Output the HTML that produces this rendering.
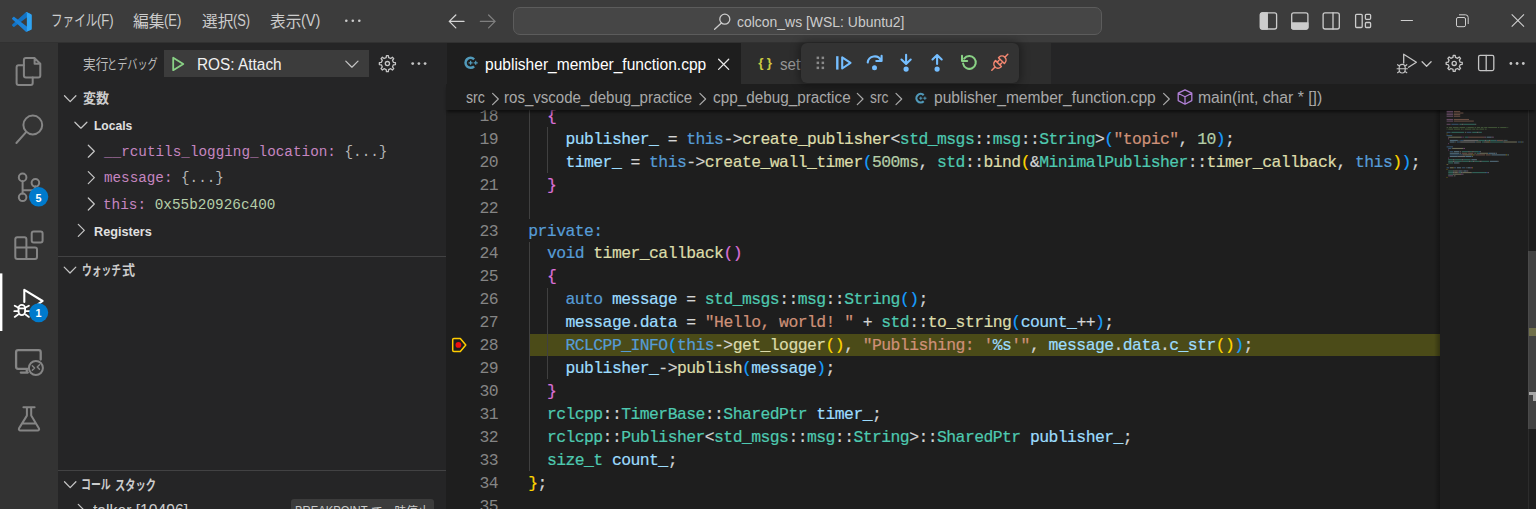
<!DOCTYPE html>
<html lang="ja">
<head>
<meta charset="utf-8">
<title>publisher_member_function.cpp - colcon_ws [WSL: Ubuntu2] - Visual Studio Code</title>
<style>
*{box-sizing:border-box;margin:0;padding:0}
html,body{width:1536px;height:509px;overflow:hidden;background:#1e1e1e}
body{position:relative;font-family:"Liberation Sans","Noto Sans CJK JP",sans-serif;font-size:15.6px;color:#cccccc}
.abs{position:absolute}
svg{display:block;overflow:visible}
.tx{white-space:nowrap;line-height:1;transform-origin:0 0}
.b{font-weight:bold}
.mono{font-family:"Liberation Mono","Noto Sans CJK JP",monospace}
/* title bar */
#titlebar{left:0;top:0;width:1536px;height:42px;background:#3c3c3c}
#titleedge{left:0;top:42px;width:1536px;height:1px;background:#313131}
#cmd{left:513px;top:7px;width:589px;height:28px;border:1px solid #5c5c5c;border-radius:7px;background:#464646}
/* activity bar */
#activity{left:0;top:43px;width:58px;height:466px;background:#333333}
/* sidebar */
#sidebar{left:58px;top:43px;width:388px;height:466px;background:#252526}
.sep{left:58px;width:388px;height:1px;background:#424243}
/* editor */
#tabs{left:446px;top:43px;width:1090px;height:41px;background:#252526}
#tab1{left:447px;top:43px;width:294px;height:41px;background:#1e1e1e}
#tab2{left:741px;top:43px;width:310px;height:41px;background:#2d2d2d}
#dbg{left:801px;top:43px;width:218px;height:39.5px;background:#333333;border-radius:6px;box-shadow:0 0 8px 2px rgba(0,0,0,.36)}
#crumbs{left:446px;top:84px;width:1090px;height:26px;background:#1e1e1e;box-shadow:0 3px 3px -1px rgba(0,0,0,.55)}
#code{left:446px;top:110px;width:1090px;height:399px;background:#1e1e1e;overflow:hidden}
.ln{font-family:"Liberation Mono",monospace;font-size:16.4px;letter-spacing:-0.57px;color:#858585;line-height:23px;height:23px;white-space:pre;text-align:right;left:440px;width:58px}
.cl{-webkit-text-stroke:0.2px;left:528.3px;font-family:"Liberation Mono",monospace;font-size:16.4px;letter-spacing:-0.548px;color:#d4d4d4;height:23px;line-height:23px;white-space:pre}
.k{color:#569cd6}.t{color:#4ec9b0}.f{color:#dcdcaa}.v{color:#9cdcfe}.s{color:#ce9178}.n{color:#b5cea8}
.b1{color:#ffd700}.b2{color:#da70d6}.b3{color:#179fff}
.guide{width:1px;background:#404040}
.vn{color:#c586c0}.vv{color:#b5b5b5}.vnum{color:#b5cea8}
</style>
</head>
<body>
<!-- TITLE BAR -->
<div id="titlebar" class="abs"></div>
<div id="titleedge" class="abs"></div>
<svg class="abs" style="left:12px;top:11.800px" width="19.800" height="19.800" viewBox="0 0 100 100"><path d="M96.461 10.796 75.857.876C73.472-.273 70.622.212 68.750 2.083L1.299 63.583c-1.814 1.654-1.812 4.510.004 6.162l5.510 5.009c1.485 1.350 3.722 1.450 5.321.237L93.361 13.370C96.086 11.303 100 13.246 100 16.667v-.240c0-2.401-1.375-4.590-3.539-5.631z" fill="#1272c4"/><path d="M96.461 89.204 75.857 99.125c-2.385 1.148-5.235.664-7.107-1.208L1.299 36.417c-1.814-1.654-1.812-4.511.004-6.162l5.510-5.009c1.485-1.350 3.722-1.450 5.321-.237L93.361 86.630C96.086 88.697 100 86.754 100 83.333v.239c0 2.401-1.375 4.590-3.539 5.632z" fill="#1b82d8"/><path d="M75.858 99.126c-2.386 1.148-5.236.662-7.108-1.209C71.056 100.223 75 98.590 75 95.328V4.672c0-3.262-3.944-4.895-6.250-2.589C70.622.211 73.472-.274 75.858.874l20.601 9.907C98.623 11.822 100 14.011 100 16.413v67.174c0 2.402-1.377 4.592-3.541 5.633z" fill="#2fa4f3"/></svg>
<div id="cmd" class="abs"></div>

<!-- ACTIVITY BAR -->
<div id="activity" class="abs"></div>

<!-- SIDEBAR -->
<div id="sidebar" class="abs"></div>
<div class="abs" style="left:164px;top:50px;width:205px;height:27px;background:#3c3c3c"></div>
<div class="abs sep" style="top:256px"></div>
<div class="abs sep" style="top:470px"></div>
<div class="abs" style="left:291px;top:499px;width:143px;height:22px;background:#3c3c3c;border-radius:3px"></div>

<!-- EDITOR -->
<div id="tabs" class="abs"></div>
<div id="tab1" class="abs"></div>
<div id="tab2" class="abs"></div>
<div id="code" class="abs"></div>
<div class="abs" style="left:529px;top:334px;width:911px;height:22px;background:#4b4b18"></div>
<div class="abs guide" style="left:529px;top:104.4px;height:114.7px"></div>
<div class="abs guide" style="left:547px;top:127.3px;height:45.9px"></div>
<div class="abs guide" style="left:529px;top:242.0px;height:229.3px"></div>
<div class="abs guide" style="left:547px;top:287.8px;height:91.7px"></div>
<div class="abs ln" style="top:104.75px">18</div>
<div class="abs cl" style="top:104.75px">  <span class="b2">{</span></div>
<div class="abs ln" style="top:127.75px">19</div>
<div class="abs cl" style="top:127.75px">    <span class="v">publisher_</span> = <span class="k">this</span>-&gt;<span class="f">create_publisher</span>&lt;<span class="t">std_msgs</span>::<span class="t">msg</span>::<span class="t">String</span>&gt;<span class="b3">(</span><span class="s">"topic"</span>, <span class="n">10</span><span class="b3">)</span>;</div>
<div class="abs ln" style="top:150.75px">20</div>
<div class="abs cl" style="top:150.75px">    <span class="v">timer_</span> = <span class="k">this</span>-&gt;<span class="f">create_wall_timer</span><span class="b3">(</span><span class="n">500ms</span>, <span class="t">std</span>::<span class="f">bind</span><span class="b1">(</span>&amp;<span class="t">MinimalPublisher</span>::<span class="f">timer_callback</span>, <span class="k">this</span><span class="b1">)</span><span class="b3">)</span>;</div>
<div class="abs ln" style="top:173.75px">21</div>
<div class="abs cl" style="top:173.75px">  <span class="b2">}</span></div>
<div class="abs ln" style="top:196.75px">22</div>
<div class="abs ln" style="top:219.75px">23</div>
<div class="abs cl" style="top:219.75px"><span class="k">private:</span></div>
<div class="abs ln" style="top:241.75px">24</div>
<div class="abs cl" style="top:241.75px">  <span class="k">void</span> <span class="f">timer_callback</span><span class="b2">()</span></div>
<div class="abs ln" style="top:264.75px">25</div>
<div class="abs cl" style="top:264.75px">  <span class="b2">{</span></div>
<div class="abs ln" style="top:287.75px">26</div>
<div class="abs cl" style="top:287.75px">    <span class="k">auto</span> <span class="v">message</span> = <span class="t">std_msgs</span>::<span class="t">msg</span>::<span class="t">String</span><span class="b3">()</span>;</div>
<div class="abs ln" style="top:310.75px">27</div>
<div class="abs cl" style="top:310.75px">    <span class="v">message</span>.<span class="v">data</span> = <span class="s">"Hello, world! "</span> + <span class="t">std</span>::<span class="f">to_string</span><span class="b3">(</span><span class="v">count_</span>++<span class="b3">)</span>;</div>
<div class="abs ln" style="top:333.75px">28</div>
<div class="abs cl" style="top:333.75px">    <span class="k">RCLCPP_INFO</span><span class="b3">(</span><span class="k">this</span>-&gt;<span class="f">get_logger</span><span class="b1">()</span>, <span class="s">"Publishing: '</span><span class="v">%s</span><span class="s">'"</span>, <span class="v">message</span>.<span class="v">data</span>.<span class="v">c_str</span><span class="b1">()</span><span class="b3">)</span>;</div>
<div class="abs ln" style="top:356.75px">29</div>
<div class="abs cl" style="top:356.75px">    <span class="v">publisher_</span>-&gt;<span class="f">publish</span><span class="b3">(</span><span class="v">message</span><span class="b3">)</span>;</div>
<div class="abs ln" style="top:379.75px">30</div>
<div class="abs cl" style="top:379.75px">  <span class="b2">}</span></div>
<div class="abs ln" style="top:402.75px">31</div>
<div class="abs cl" style="top:402.75px">  <span class="t">rclcpp</span>::<span class="t">TimerBase</span>::<span class="t">SharedPtr</span> <span class="v">timer_</span>;</div>
<div class="abs ln" style="top:425.75px">32</div>
<div class="abs cl" style="top:425.75px">  <span class="t">rclcpp</span>::<span class="t">Publisher</span>&lt;<span class="t">std_msgs</span>::<span class="t">msg</span>::<span class="t">String</span>&gt;::<span class="t">SharedPtr</span> <span class="v">publisher_</span>;</div>
<div class="abs ln" style="top:448.75px">33</div>
<div class="abs cl" style="top:448.75px">  <span class="t">size_t</span> <span class="v">count_</span>;</div>
<div class="abs ln" style="top:471.75px">34</div>
<div class="abs cl" style="top:471.75px"><span class="b1">}</span>;</div>
<div class="abs ln" style="top:494.75px">35</div>

<!-- minimap + scrollbar -->
<div class="abs" style="left:1434px;top:110px;width:6px;height:399px;background:linear-gradient(to right,rgba(0,0,0,0),rgba(0,0,0,.32))"></div>
<div class="abs" style="left:1440px;top:110px;width:96px;height:399px;background:#1e1e1e"></div>
<div class="abs" style="left:1528px;top:110px;width:1px;height:399px;background:#2c2c2c"></div>
<div class="abs" style="left:1529px;top:328px;width:7px;height:8px;background:#6b6a2c"></div>
<div class="abs" style="left:1528px;top:251px;width:8px;height:178px;background:rgba(121,121,121,.4)"></div>
<div class="abs" style="left:1529px;top:392px;width:7px;height:3px;background:#a8a8a8"></div>
<div class="abs" style="left:1533px;top:392px;width:3px;height:9px;background:#a8a8a8"></div>
<div id="crumbs" class="abs"></div>
<div class="abs tx" style="left:50.82px;top:13.45px;transform:scaleX(0.7417);color:#cccccc;font-size:15.6px">ファイル</div>
<div class="abs tx" style="left:96.96px;top:13.4px;transform:scaleX(0.8389);color:#cccccc;font-size:15.6px">(F)</div>
<div class="abs tx" style="left:132.7px;top:14.15px;transform:scaleX(1.0097);color:#cccccc;font-size:15.6px">編集</div>
<div class="abs tx" style="left:164.36px;top:13.4px;transform:scaleX(0.8368);color:#cccccc;font-size:15.6px">(E)</div>
<div class="abs tx" style="left:201.5px;top:14.15px;transform:scaleX(1.0032);color:#cccccc;font-size:15.6px">選択</div>
<div class="abs tx" style="left:232.78px;top:13.4px;transform:scaleX(0.8211);color:#cccccc;font-size:15.6px">(S)</div>
<div class="abs tx" style="left:269.9px;top:14.15px;transform:scaleX(1.0032);color:#cccccc;font-size:15.6px">表示</div>
<div class="abs tx" style="left:300.87px;top:13.4px;transform:scaleX(0.9316);color:#cccccc;font-size:15.6px">(V)</div>
<div class="abs tx" style="left:737.0px;top:14.5px;transform:scaleX(0.9554);color:#cccccc;font-size:14.6px">colcon_ws [WSL: Ubuntu2]</div>
<div class="abs tx" style="left:82.7px;top:57.65px;transform:scaleX(0.9577);color:#bbbbbb;font-size:13.2px">実行</div>
<div class="abs tx" style="left:106.96px;top:57.65px;transform:scaleX(0.7687);color:#bbbbbb;font-size:13.2px">とデバッグ</div>
<div class="abs tx" style="left:196.81px;top:56.6px;transform:scaleX(0.9869);color:#f0f0f0;font-size:15.6px">ROS: Attach</div>
<div class="abs tx" style="left:82.9px;top:92.15px;transform:scaleX(0.9885);color:#cccccc;font-size:13.2px;font-weight:bold">変数</div>
<div class="abs tx" style="left:93.99px;top:118.5px;transform:scaleX(0.9146);color:#e0e0e0;font-size:13.2px;font-weight:bold">Locals</div>
<div class="abs tx mono" style="left:104.0px;top:144.7px;transform:scaleX(1.0011);color:#b5b5b5;font-size:14.3px"><span class="vn">__rcutils_logging_location:</span> {...}</div>
<div class="abs tx mono" style="left:104.0px;top:171.1px;transform:scaleX(0.9975);color:#b5b5b5;font-size:14.3px"><span class="vn">message:</span> {...}</div>
<div class="abs tx mono" style="left:103.0px;top:197.6px;transform:scaleX(1.0047);color:#b5cea8;font-size:14.3px"><span class="vn">this:</span> 0x55b20926c400</div>
<div class="abs tx" style="left:93.64px;top:224.5px;transform:scaleX(0.961);color:#e0e0e0;font-size:13.2px;font-weight:bold">Registers</div>
<div class="abs tx" style="left:81.96px;top:263.9px;transform:scaleX(0.7412);color:#cccccc;font-size:13.2px;font-weight:bold">ウォッチ</div>
<div class="abs tx" style="left:121.5px;top:263.9px;transform:scaleX(0.9923);color:#cccccc;font-size:13.2px;font-weight:bold">式</div>
<div class="abs tx" style="left:80.5px;top:478.1px;transform:scaleX(0.7514);color:#cccccc;font-size:13.2px;font-weight:bold">コール</div>
<div class="abs tx" style="left:114.82px;top:478.5px;transform:scaleX(0.7765);color:#cccccc;font-size:13.2px;font-weight:bold">スタック</div>
<div class="abs tx" style="left:93.4px;top:503.1px;transform:scaleX(1.0064);color:#cccccc;font-size:15.6px">talker [10496]</div>
<div class="abs tx" style="left:294.5px;top:504.8px;transform:scaleX(0.9);color:#cccccc;font-size:12.5px">BREAKPOINT</div>
<div class="abs tx" style="left:370.56px;top:505.5px;transform:scaleX(0.9393);color:#cccccc;font-size:12.5px">で一時停止</div>
<div class="abs tx" style="left:485.1px;top:56.6px;transform:scaleX(0.9968);color:#ffffff;font-size:15.6px">publisher_member_function.cpp</div>
<div class="abs tx" style="left:780.3px;top:56.6px;transform:scaleX(0.9762);color:#969696;font-size:15.6px">settings.json</div>
<div class="abs tx" style="left:465.8px;top:90.0px;transform:scaleX(0.9095);color:#a9a9a9;font-size:15.6px">src</div>
<div class="abs tx" style="left:504.24px;top:90.0px;transform:scaleX(0.9649);color:#a9a9a9;font-size:15.6px">ros_vscode_debug_practice</div>
<div class="abs tx" style="left:712.5px;top:90.0px;transform:scaleX(0.98);color:#a9a9a9;font-size:15.6px">cpp_debug_practice</div>
<div class="abs tx" style="left:869.7px;top:90.0px;transform:scaleX(0.8857);color:#a9a9a9;font-size:15.6px">src</div>
<div class="abs tx" style="left:934.0px;top:90.0px;transform:scaleX(0.9991);color:#a9a9a9;font-size:15.6px">publisher_member_function.cpp</div>
<div class="abs tx" style="left:1198.19px;top:90.0px;transform:scaleX(1.0091);color:#a9a9a9;font-size:15.6px">main(int, char * [])</div>
<div id="dbg" class="abs"></div>

<!-- ICON OVERLAY -->
<svg class="abs" style="left:0;top:0;pointer-events:none" width="1536" height="509" viewBox="0 0 1536 509" fill="none" stroke-linecap="round" stroke-linejoin="round">
<g opacity="0.42" stroke="none">
<rect x="1446.6" y="110.90" width="6.4" height="1.05" fill="#c586c0"/>
<rect x="1453.8" y="110.90" width="6.4" height="1.05" fill="#ce9178"/>
<rect x="1446.6" y="112.51" width="6.4" height="1.05" fill="#c586c0"/>
<rect x="1453.8" y="112.51" width="9.6" height="1.05" fill="#ce9178"/>
<rect x="1446.6" y="114.12" width="6.4" height="1.05" fill="#c586c0"/>
<rect x="1453.8" y="114.12" width="6.4" height="1.05" fill="#ce9178"/>
<rect x="1446.6" y="115.73" width="6.4" height="1.05" fill="#c586c0"/>
<rect x="1453.8" y="115.73" width="6.4" height="1.05" fill="#ce9178"/>
<rect x="1446.6" y="118.95" width="6.4" height="1.05" fill="#c586c0"/>
<rect x="1453.8" y="118.95" width="15.2" height="1.05" fill="#ce9178"/>
<rect x="1446.6" y="120.56" width="6.4" height="1.05" fill="#c586c0"/>
<rect x="1453.8" y="120.56" width="20.0" height="1.05" fill="#ce9178"/>
<rect x="1446.6" y="123.78" width="4.0" height="1.05" fill="#c586c0"/>
<rect x="1451.4" y="123.78" width="7.2" height="1.05" fill="#569cd6"/>
<rect x="1459.4" y="123.78" width="2.4" height="1.05" fill="#4ec9b0"/>
<rect x="1461.8" y="123.78" width="1.6" height="1.05" fill="#d4d4d4"/>
<rect x="1463.4" y="123.78" width="12.0" height="1.05" fill="#4ec9b0"/>
<rect x="1475.4" y="123.78" width="0.8" height="1.05" fill="#d4d4d4"/>
<rect x="1446.6" y="127.00" width="1.6" height="1.05" fill="#6a9955"/>
<rect x="1449.0" y="127.00" width="3.2" height="1.05" fill="#6a9955"/>
<rect x="1453.0" y="127.00" width="5.6" height="1.05" fill="#6a9955"/>
<rect x="1459.4" y="127.00" width="5.6" height="1.05" fill="#6a9955"/>
<rect x="1465.8" y="127.00" width="0.8" height="1.05" fill="#6a9955"/>
<rect x="1467.4" y="127.00" width="6.4" height="1.05" fill="#6a9955"/>
<rect x="1474.6" y="127.00" width="1.6" height="1.05" fill="#6a9955"/>
<rect x="1477.0" y="127.00" width="3.2" height="1.05" fill="#6a9955"/>
<rect x="1481.0" y="127.00" width="2.4" height="1.05" fill="#6a9955"/>
<rect x="1484.2" y="127.00" width="3.2" height="1.05" fill="#6a9955"/>
<rect x="1488.2" y="127.00" width="8.8" height="1.05" fill="#6a9955"/>
<rect x="1497.8" y="127.00" width="1.6" height="1.05" fill="#6a9955"/>
<rect x="1500.2" y="127.00" width="6.4" height="1.05" fill="#6a9955"/>
<rect x="1507.4" y="127.00" width="0.8" height="1.05" fill="#6a9955"/>
<rect x="1446.6" y="128.61" width="0.8" height="1.05" fill="#6a9955"/>
<rect x="1448.2" y="128.61" width="4.8" height="1.05" fill="#6a9955"/>
<rect x="1453.8" y="128.61" width="6.4" height="1.05" fill="#6a9955"/>
<rect x="1461.0" y="128.61" width="1.6" height="1.05" fill="#6a9955"/>
<rect x="1463.4" y="128.61" width="0.8" height="1.05" fill="#6a9955"/>
<rect x="1465.0" y="128.61" width="6.4" height="1.05" fill="#6a9955"/>
<rect x="1472.2" y="128.61" width="3.2" height="1.05" fill="#6a9955"/>
<rect x="1476.2" y="128.61" width="2.4" height="1.05" fill="#6a9955"/>
<rect x="1479.4" y="128.61" width="4.8" height="1.05" fill="#6a9955"/>
<rect x="1485.0" y="128.61" width="1.6" height="1.05" fill="#6a9955"/>
<rect x="1446.6" y="131.83" width="4.0" height="1.05" fill="#569cd6"/>
<rect x="1451.4" y="131.83" width="12.8" height="1.05" fill="#4ec9b0"/>
<rect x="1465.0" y="131.83" width="0.8" height="1.05" fill="#d4d4d4"/>
<rect x="1466.6" y="131.83" width="4.8" height="1.05" fill="#569cd6"/>
<rect x="1472.2" y="131.83" width="4.8" height="1.05" fill="#4ec9b0"/>
<rect x="1477.0" y="131.83" width="1.6" height="1.05" fill="#d4d4d4"/>
<rect x="1478.6" y="131.83" width="3.2" height="1.05" fill="#4ec9b0"/>
<rect x="1446.6" y="133.44" width="0.8" height="1.05" fill="#ffd700"/>
<rect x="1446.6" y="135.05" width="5.6" height="1.05" fill="#569cd6"/>
<rect x="1448.2" y="136.66" width="12.8" height="1.05" fill="#dcdcaa"/>
<rect x="1461.0" y="136.66" width="1.6" height="1.05" fill="#da70d6"/>
<rect x="1463.4" y="136.66" width="0.8" height="1.05" fill="#d4d4d4"/>
<rect x="1465.0" y="136.66" width="3.2" height="1.05" fill="#4ec9b0"/>
<rect x="1468.2" y="136.66" width="0.8" height="1.05" fill="#da70d6"/>
<rect x="1469.0" y="136.66" width="15.2" height="1.05" fill="#ce9178"/>
<rect x="1484.2" y="136.66" width="0.8" height="1.05" fill="#da70d6"/>
<rect x="1485.0" y="136.66" width="0.8" height="1.05" fill="#d4d4d4"/>
<rect x="1486.6" y="136.66" width="4.8" height="1.05" fill="#9cdcfe"/>
<rect x="1491.4" y="136.66" width="0.8" height="1.05" fill="#da70d6"/>
<rect x="1492.2" y="136.66" width="0.8" height="1.05" fill="#b5cea8"/>
<rect x="1493.0" y="136.66" width="0.8" height="1.05" fill="#da70d6"/>
<rect x="1448.2" y="138.27" width="0.8" height="1.05" fill="#da70d6"/>
<rect x="1449.8" y="139.88" width="8.0" height="1.05" fill="#9cdcfe"/>
<rect x="1458.6" y="139.88" width="0.8" height="1.05" fill="#d4d4d4"/>
<rect x="1460.2" y="139.88" width="3.2" height="1.05" fill="#569cd6"/>
<rect x="1463.4" y="139.88" width="15.2" height="1.05" fill="#d4d4d4"/>
<rect x="1478.6" y="139.88" width="6.4" height="1.05" fill="#4ec9b0"/>
<rect x="1485.0" y="139.88" width="1.6" height="1.05" fill="#d4d4d4"/>
<rect x="1486.6" y="139.88" width="2.4" height="1.05" fill="#4ec9b0"/>
<rect x="1489.0" y="139.88" width="1.6" height="1.05" fill="#d4d4d4"/>
<rect x="1490.6" y="139.88" width="4.8" height="1.05" fill="#4ec9b0"/>
<rect x="1495.4" y="139.88" width="0.8" height="1.05" fill="#d4d4d4"/>
<rect x="1496.2" y="139.88" width="0.8" height="1.05" fill="#179fff"/>
<rect x="1497.0" y="139.88" width="5.6" height="1.05" fill="#ce9178"/>
<rect x="1502.6" y="139.88" width="0.8" height="1.05" fill="#d4d4d4"/>
<rect x="1504.2" y="139.88" width="1.6" height="1.05" fill="#b5cea8"/>
<rect x="1505.8" y="139.88" width="0.8" height="1.05" fill="#179fff"/>
<rect x="1506.6" y="139.88" width="0.8" height="1.05" fill="#d4d4d4"/>
<rect x="1449.8" y="141.49" width="4.8" height="1.05" fill="#9cdcfe"/>
<rect x="1455.4" y="141.49" width="0.8" height="1.05" fill="#d4d4d4"/>
<rect x="1457.0" y="141.49" width="3.2" height="1.05" fill="#569cd6"/>
<rect x="1460.2" y="141.49" width="15.2" height="1.05" fill="#d4d4d4"/>
<rect x="1475.4" y="141.49" width="0.8" height="1.05" fill="#179fff"/>
<rect x="1476.2" y="141.49" width="4.0" height="1.05" fill="#b5cea8"/>
<rect x="1480.2" y="141.49" width="0.8" height="1.05" fill="#d4d4d4"/>
<rect x="1481.8" y="141.49" width="2.4" height="1.05" fill="#4ec9b0"/>
<rect x="1484.2" y="141.49" width="1.6" height="1.05" fill="#d4d4d4"/>
<rect x="1485.8" y="141.49" width="3.2" height="1.05" fill="#dcdcaa"/>
<rect x="1489.0" y="141.49" width="0.8" height="1.05" fill="#ffd700"/>
<rect x="1489.8" y="141.49" width="0.8" height="1.05" fill="#d4d4d4"/>
<rect x="1490.6" y="141.49" width="12.8" height="1.05" fill="#4ec9b0"/>
<rect x="1503.4" y="141.49" width="1.6" height="1.05" fill="#d4d4d4"/>
<rect x="1505.0" y="141.49" width="11.2" height="1.05" fill="#dcdcaa"/>
<rect x="1516.2" y="141.49" width="0.8" height="1.05" fill="#d4d4d4"/>
<rect x="1517.8" y="141.49" width="3.2" height="1.05" fill="#569cd6"/>
<rect x="1521.0" y="141.49" width="0.8" height="1.05" fill="#ffd700"/>
<rect x="1521.8" y="141.49" width="0.8" height="1.05" fill="#179fff"/>
<rect x="1522.6" y="141.49" width="0.8" height="1.05" fill="#d4d4d4"/>
<rect x="1448.2" y="143.10" width="0.8" height="1.05" fill="#da70d6"/>
<rect x="1446.6" y="146.32" width="6.4" height="1.05" fill="#569cd6"/>
<rect x="1448.2" y="147.93" width="3.2" height="1.05" fill="#569cd6"/>
<rect x="1452.2" y="147.93" width="11.2" height="1.05" fill="#dcdcaa"/>
<rect x="1463.4" y="147.93" width="1.6" height="1.05" fill="#da70d6"/>
<rect x="1448.2" y="149.54" width="0.8" height="1.05" fill="#da70d6"/>
<rect x="1449.8" y="151.15" width="3.2" height="1.05" fill="#569cd6"/>
<rect x="1453.8" y="151.15" width="5.6" height="1.05" fill="#9cdcfe"/>
<rect x="1460.2" y="151.15" width="0.8" height="1.05" fill="#d4d4d4"/>
<rect x="1461.8" y="151.15" width="6.4" height="1.05" fill="#4ec9b0"/>
<rect x="1468.2" y="151.15" width="1.6" height="1.05" fill="#d4d4d4"/>
<rect x="1469.8" y="151.15" width="2.4" height="1.05" fill="#4ec9b0"/>
<rect x="1472.2" y="151.15" width="1.6" height="1.05" fill="#d4d4d4"/>
<rect x="1473.8" y="151.15" width="4.8" height="1.05" fill="#4ec9b0"/>
<rect x="1478.6" y="151.15" width="1.6" height="1.05" fill="#179fff"/>
<rect x="1480.2" y="151.15" width="0.8" height="1.05" fill="#d4d4d4"/>
<rect x="1449.8" y="152.76" width="9.6" height="1.05" fill="#9cdcfe"/>
<rect x="1460.2" y="152.76" width="0.8" height="1.05" fill="#d4d4d4"/>
<rect x="1461.8" y="152.76" width="5.6" height="1.05" fill="#ce9178"/>
<rect x="1468.2" y="152.76" width="4.8" height="1.05" fill="#ce9178"/>
<rect x="1473.8" y="152.76" width="0.8" height="1.05" fill="#ce9178"/>
<rect x="1475.4" y="152.76" width="0.8" height="1.05" fill="#d4d4d4"/>
<rect x="1477.0" y="152.76" width="2.4" height="1.05" fill="#4ec9b0"/>
<rect x="1479.4" y="152.76" width="1.6" height="1.05" fill="#d4d4d4"/>
<rect x="1481.0" y="152.76" width="7.2" height="1.05" fill="#dcdcaa"/>
<rect x="1488.2" y="152.76" width="0.8" height="1.05" fill="#179fff"/>
<rect x="1489.0" y="152.76" width="4.8" height="1.05" fill="#9cdcfe"/>
<rect x="1493.8" y="152.76" width="1.6" height="1.05" fill="#d4d4d4"/>
<rect x="1495.4" y="152.76" width="0.8" height="1.05" fill="#179fff"/>
<rect x="1496.2" y="152.76" width="0.8" height="1.05" fill="#d4d4d4"/>
<rect x="1449.8" y="154.37" width="8.8" height="1.05" fill="#569cd6"/>
<rect x="1458.6" y="154.37" width="0.8" height="1.05" fill="#179fff"/>
<rect x="1459.4" y="154.37" width="3.2" height="1.05" fill="#569cd6"/>
<rect x="1462.6" y="154.37" width="1.6" height="1.05" fill="#d4d4d4"/>
<rect x="1464.2" y="154.37" width="8.0" height="1.05" fill="#dcdcaa"/>
<rect x="1472.2" y="154.37" width="1.6" height="1.05" fill="#ffd700"/>
<rect x="1473.8" y="154.37" width="0.8" height="1.05" fill="#d4d4d4"/>
<rect x="1475.4" y="154.37" width="9.6" height="1.05" fill="#ce9178"/>
<rect x="1485.8" y="154.37" width="4.0" height="1.05" fill="#ce9178"/>
<rect x="1489.8" y="154.37" width="0.8" height="1.05" fill="#d4d4d4"/>
<rect x="1491.4" y="154.37" width="14.4" height="1.05" fill="#9cdcfe"/>
<rect x="1505.8" y="154.37" width="1.6" height="1.05" fill="#ffd700"/>
<rect x="1507.4" y="154.37" width="0.8" height="1.05" fill="#179fff"/>
<rect x="1508.2" y="154.37" width="0.8" height="1.05" fill="#d4d4d4"/>
<rect x="1449.8" y="155.98" width="8.0" height="1.05" fill="#9cdcfe"/>
<rect x="1457.8" y="155.98" width="7.2" height="1.05" fill="#d4d4d4"/>
<rect x="1465.0" y="155.98" width="0.8" height="1.05" fill="#179fff"/>
<rect x="1465.8" y="155.98" width="5.6" height="1.05" fill="#9cdcfe"/>
<rect x="1471.4" y="155.98" width="0.8" height="1.05" fill="#179fff"/>
<rect x="1472.2" y="155.98" width="0.8" height="1.05" fill="#d4d4d4"/>
<rect x="1448.2" y="157.59" width="0.8" height="1.05" fill="#da70d6"/>
<rect x="1448.2" y="159.20" width="4.8" height="1.05" fill="#4ec9b0"/>
<rect x="1453.0" y="159.20" width="1.6" height="1.05" fill="#d4d4d4"/>
<rect x="1454.6" y="159.20" width="7.2" height="1.05" fill="#4ec9b0"/>
<rect x="1461.8" y="159.20" width="1.6" height="1.05" fill="#d4d4d4"/>
<rect x="1463.4" y="159.20" width="7.2" height="1.05" fill="#4ec9b0"/>
<rect x="1471.4" y="159.20" width="4.8" height="1.05" fill="#9cdcfe"/>
<rect x="1476.2" y="159.20" width="0.8" height="1.05" fill="#d4d4d4"/>
<rect x="1448.2" y="160.81" width="4.8" height="1.05" fill="#4ec9b0"/>
<rect x="1453.0" y="160.81" width="1.6" height="1.05" fill="#d4d4d4"/>
<rect x="1454.6" y="160.81" width="7.2" height="1.05" fill="#4ec9b0"/>
<rect x="1461.8" y="160.81" width="0.8" height="1.05" fill="#d4d4d4"/>
<rect x="1462.6" y="160.81" width="6.4" height="1.05" fill="#4ec9b0"/>
<rect x="1469.0" y="160.81" width="1.6" height="1.05" fill="#d4d4d4"/>
<rect x="1470.6" y="160.81" width="2.4" height="1.05" fill="#4ec9b0"/>
<rect x="1473.0" y="160.81" width="1.6" height="1.05" fill="#d4d4d4"/>
<rect x="1474.6" y="160.81" width="4.8" height="1.05" fill="#4ec9b0"/>
<rect x="1479.4" y="160.81" width="2.4" height="1.05" fill="#d4d4d4"/>
<rect x="1481.8" y="160.81" width="7.2" height="1.05" fill="#4ec9b0"/>
<rect x="1489.8" y="160.81" width="8.0" height="1.05" fill="#9cdcfe"/>
<rect x="1497.8" y="160.81" width="0.8" height="1.05" fill="#d4d4d4"/>
<rect x="1448.2" y="162.42" width="4.8" height="1.05" fill="#4ec9b0"/>
<rect x="1453.8" y="162.42" width="4.8" height="1.05" fill="#9cdcfe"/>
<rect x="1458.6" y="162.42" width="0.8" height="1.05" fill="#d4d4d4"/>
<rect x="1446.6" y="164.03" width="0.8" height="1.05" fill="#ffd700"/>
<rect x="1447.4" y="164.03" width="0.8" height="1.05" fill="#d4d4d4"/>
<rect x="1446.6" y="167.25" width="2.4" height="1.05" fill="#569cd6"/>
<rect x="1449.8" y="167.25" width="3.2" height="1.05" fill="#dcdcaa"/>
<rect x="1453.0" y="167.25" width="0.8" height="1.05" fill="#ffd700"/>
<rect x="1453.8" y="167.25" width="2.4" height="1.05" fill="#569cd6"/>
<rect x="1457.0" y="167.25" width="3.2" height="1.05" fill="#9cdcfe"/>
<rect x="1460.2" y="167.25" width="0.8" height="1.05" fill="#d4d4d4"/>
<rect x="1461.8" y="167.25" width="3.2" height="1.05" fill="#569cd6"/>
<rect x="1465.8" y="167.25" width="0.8" height="1.05" fill="#d4d4d4"/>
<rect x="1467.4" y="167.25" width="3.2" height="1.05" fill="#9cdcfe"/>
<rect x="1470.6" y="167.25" width="1.6" height="1.05" fill="#da70d6"/>
<rect x="1472.2" y="167.25" width="0.8" height="1.05" fill="#ffd700"/>
<rect x="1446.6" y="168.86" width="0.8" height="1.05" fill="#ffd700"/>
<rect x="1448.2" y="170.47" width="4.8" height="1.05" fill="#4ec9b0"/>
<rect x="1453.0" y="170.47" width="1.6" height="1.05" fill="#d4d4d4"/>
<rect x="1454.6" y="170.47" width="3.2" height="1.05" fill="#dcdcaa"/>
<rect x="1457.8" y="170.47" width="0.8" height="1.05" fill="#da70d6"/>
<rect x="1458.6" y="170.47" width="3.2" height="1.05" fill="#9cdcfe"/>
<rect x="1461.8" y="170.47" width="0.8" height="1.05" fill="#d4d4d4"/>
<rect x="1463.4" y="170.47" width="3.2" height="1.05" fill="#9cdcfe"/>
<rect x="1466.6" y="170.47" width="0.8" height="1.05" fill="#da70d6"/>
<rect x="1467.4" y="170.47" width="0.8" height="1.05" fill="#d4d4d4"/>
<rect x="1448.2" y="172.08" width="4.8" height="1.05" fill="#4ec9b0"/>
<rect x="1453.0" y="172.08" width="1.6" height="1.05" fill="#d4d4d4"/>
<rect x="1454.6" y="172.08" width="3.2" height="1.05" fill="#dcdcaa"/>
<rect x="1457.8" y="172.08" width="0.8" height="1.05" fill="#da70d6"/>
<rect x="1458.6" y="172.08" width="2.4" height="1.05" fill="#4ec9b0"/>
<rect x="1461.0" y="172.08" width="1.6" height="1.05" fill="#d4d4d4"/>
<rect x="1462.6" y="172.08" width="8.8" height="1.05" fill="#dcdcaa"/>
<rect x="1471.4" y="172.08" width="0.8" height="1.05" fill="#d4d4d4"/>
<rect x="1472.2" y="172.08" width="12.8" height="1.05" fill="#4ec9b0"/>
<rect x="1485.0" y="172.08" width="0.8" height="1.05" fill="#d4d4d4"/>
<rect x="1485.8" y="172.08" width="1.6" height="1.05" fill="#179fff"/>
<rect x="1487.4" y="172.08" width="0.8" height="1.05" fill="#da70d6"/>
<rect x="1488.2" y="172.08" width="0.8" height="1.05" fill="#d4d4d4"/>
<rect x="1448.2" y="173.69" width="4.8" height="1.05" fill="#4ec9b0"/>
<rect x="1453.0" y="173.69" width="1.6" height="1.05" fill="#d4d4d4"/>
<rect x="1454.6" y="173.69" width="6.4" height="1.05" fill="#dcdcaa"/>
<rect x="1461.0" y="173.69" width="1.6" height="1.05" fill="#da70d6"/>
<rect x="1462.6" y="173.69" width="0.8" height="1.05" fill="#d4d4d4"/>
<rect x="1448.2" y="175.30" width="4.8" height="1.05" fill="#c586c0"/>
<rect x="1453.8" y="175.30" width="0.8" height="1.05" fill="#b5cea8"/>
<rect x="1454.6" y="175.30" width="0.8" height="1.05" fill="#d4d4d4"/>
<rect x="1446.6" y="176.91" width="0.8" height="1.05" fill="#ffd700"/>
</g>

<!-- activity: files -->
<g stroke="#858585" stroke-width="2">
<path d="M34.6 58.1H25.900a2 2 0 0 0-2 2V75.500a2 2 0 0 0 2 2H38.300a2 2 0 0 0 2-2V63.800zM34.600 58.100V63.800H40.300"/>
<path d="M23.900 65.300H18.600a2 2 0 0 0-2 2V82.900a2 2 0 0 0 2 2H30.700a2 2 0 0 0 2-2V77.500"/>
<!-- search -->
<circle cx="32.800" cy="125" r="9.400"/><path d="M26.300 131.800 16.400 143"/>
<!-- scm -->
<circle cx="22.600" cy="177.400" r="3.800"/><circle cx="22.600" cy="197.300" r="3.800"/><circle cx="35.400" cy="182.800" r="3.800"/>
<path d="M22.600 181.200V193.500M35.400 186.600c0 3.700-3 3.700-6 3.700H22.600"/>
<!-- extensions -->
<path d="M17.300 237.300H24.400a2 2 0 0 1 2 2V247.500H35a2 2 0 0 1 2 2V256.900a2 2 0 0 1-2 2H17.300a2 2 0 0 1-2-2V239.300a2 2 0 0 1 2-2zM26.400 247.500V258.900M15.300 247.500H26.400"/>
<rect x="31.700" y="231.600" width="10.900" height="10.800" rx="2"/>
<!-- remote -->
<path d="M40.700 359.500V352.200a2 2 0 0 0-2-2H18.100a2 2 0 0 0-2 2V366.800a2 2 0 0 0 2 2H27.500M26.800 369V372.600M20.800 372.600H27.800" stroke-width="2.300"/>
<circle cx="35.900" cy="368" r="7"/>
<path d="M32.300 365.700 34.600 368 32.300 370.300M39.500 364.700 37.200 367 39.500 369.300" stroke-width="1.400"/>
<!-- flask -->
<path d="M23.400 407.300H34.600M26.900 407.300V415.600L19 428.400a1.500 1.500 0 0 0 1.300 2.200H37.700a1.500 1.500 0 0 0 1.300-2.200L31.200 415.600V407.300M22.200 423.500H35.800"/>
</g>
<!-- scm badge -->
<circle cx="38.600" cy="196.800" r="9.700" fill="#007acc"/>
<!-- debug (active) -->
<g stroke="#ffffff" stroke-width="2.100">
<path d="M24.300 302V289.900L42.600 301 38.500 303.800"/>
<g stroke-width="1.800"><rect x="18.500" y="304.900" width="6.600" height="10.200" rx="3.300"/>
<path d="M18.500 308.400H25.100M14.700 305.700 18 307.500M28.900 305.700 25.600 307.500M14.300 311.200H18.500M29.300 311.200H25.100M14.700 316.900 18.100 314.600M28.900 316.900 25.500 314.600"/></g>
</g>
<circle cx="38.700" cy="312.700" r="9.500" fill="#007acc"/>
<rect x="0" y="273.400" width="2.400" height="57.600" fill="#ffffff"/>
<!-- title bar nav -->
<path d="M464 21.400H449.300M455.800 15 449.300 21.400 455.800 27.900" stroke="#d4d4d4" stroke-width="1.300"/>
<path d="M480.400 21.400H495.100M488.600 15 495.100 21.400 488.600 27.900" stroke="#7f7f7f" stroke-width="1.300"/>
<circle cx="724.800" cy="19.200" r="5" stroke="#cccccc" stroke-width="1.300"/><path d="M721.400 23 714.600 29.300" stroke="#cccccc" stroke-width="1.300"/>
<!-- layout controls -->
<g stroke="#cccccc" stroke-width="1.300">
<rect x="1260.400" y="12.800" width="16.200" height="16.200" rx="2"/><path d="M1260.400 14.800a2 2 0 0 1 2-2H1267.300V29H1262.400a2 2 0 0 1-2-2z" fill="#cccccc"/>
<rect x="1291.700" y="12.800" width="16.200" height="16.200" rx="2"/><path d="M1291.700 22.900H1307.900V27a2 2 0 0 1-2 2H1293.700a2 2 0 0 1-2-2z" fill="#cccccc"/>
<rect x="1323.100" y="12.800" width="16.200" height="16.200" rx="2"/><path d="M1333 12.800V29"/>
<rect x="1355.600" y="14.300" width="6.600" height="13.200" rx="1"/><rect x="1365.400" y="14.300" width="5.200" height="5" rx="1"/><rect x="1365.400" y="22.500" width="5.200" height="5" rx="1"/>
</g>
<!-- window controls -->
<g stroke="#cfcfcf" stroke-width="1" stroke-linecap="butt">
<path d="M1400.800 20.500H1412.900"/>
<rect x="1456.500" y="17.500" width="9" height="9.200" rx="1.500"/><path d="M1459 14.800H1465.500a2.700 2.700 0 0 1 2.700 2.700V24" />
<path d="M1511.700 14.400 1524 26.700M1524 14.400 1511.700 26.700" stroke-width="1.100"/>
</g>

<!-- sidebar chevrons -->
<g stroke="#c5c5c5" stroke-width="1.250">
<path d="M64.500 95.700 70.200 101.600 75.900 95.700"/>
<path d="M74.900 122.200 80.900 128.200 86.900 122.200"/>
<path d="M88.300 145.200 94.300 151.200 88.300 157.200"/>
<path d="M88.300 171.600 94.300 177.600 88.300 183.600"/>
<path d="M88.300 198 94.300 204 88.300 210"/>
<path d="M78.300 224.400 84.300 230.400 78.300 236.400"/>
<path d="M64.200 267.100 70 273 75.800 267.100"/>
<path d="M64.500 481.700 70.200 487.600 75.900 481.700"/>
<path d="M78.300 504.400 84.300 510.400 78.300 516.400"/>
<!-- dropdown chevron -->
<path d="M345.800 61.100 351.900 67.200 358 61.100"/>
</g>
<!-- start debugging triangle -->
<path d="M173.200 57.700V70.200L183.300 63.950z" stroke="#89d185" stroke-width="1.800"/>
<!-- sidebar gear + dots -->
<path d="M386.16 57.63 L386.45 55.56 L388.35 55.56 L388.64 57.63 L390.75 58.50 L392.41 57.24 L393.76 58.59 L392.50 60.25 L393.37 62.36 L395.44 62.65 L395.44 64.55 L393.37 64.84 L392.50 66.95 L393.76 68.61 L392.41 69.96 L390.75 68.70 L388.64 69.57 L388.35 71.64 L386.45 71.64 L386.16 69.57 L384.05 68.70 L382.39 69.96 L381.04 68.61 L382.30 66.95 L381.43 64.84 L379.36 64.55 L379.36 62.65 L381.43 62.36 L382.30 60.25 L381.04 58.59 L382.39 57.24 L384.05 58.50z" stroke="#c5c5c5" stroke-width="1.3" stroke-linejoin="round"/><circle cx="387.4" cy="63.6" r="2.1" stroke="#c5c5c5" stroke-width="1.3"/>
<g fill="#c5c5c5"><circle cx="412.700" cy="63.600" r="1.400"/><circle cx="418.900" cy="63.600" r="1.400"/><circle cx="425.100" cy="63.600" r="1.400"/></g>
<!-- menu dots -->
<g fill="#cccccc"><circle cx="346.300" cy="20.800" r="1.300"/><circle cx="352.800" cy="20.800" r="1.300"/><circle cx="359.300" cy="20.800" r="1.300"/></g>
<!-- tab: cpp icon -->
<g id="cppi">
<path d="M474.100 66.300A5 5 0 1 1 474.100 59.300" stroke="#519aba" stroke-width="2.500" stroke-linecap="butt"/>
<path d="M468.600 62.800H472.600M470.600 60.800V64.800M473.700 62.800H477.700M475.700 60.800V64.800" stroke="#519aba" stroke-width="1.200" stroke-linecap="butt"/>
</g>
<!-- tab close -->
<path d="M718.600 59.300 728.700 69.400M728.700 59.300 718.600 69.400" stroke="#e8e8e8" stroke-width="1.300"/>
<!-- breadcrumb chevrons -->
<g stroke="#a9a9a9" stroke-width="1.200">
<path d="M492.600 93.300 498.300 99 492.600 104.700"/>
<path d="M699.900 93.300 705.600 99 699.900 104.700"/>
<path d="M857.300 93.300 863 99 857.300 104.700"/>
<path d="M896 93.300 901.700 99 896 104.700"/>
<path d="M1163.600 93.300 1169.300 99 1163.600 104.700"/>
</g>
<!-- breadcrumb cpp icon -->
<path d="M923.700 101.300A4.300 4.300 0 1 1 923.700 95.100" stroke="#519aba" stroke-width="2.200" stroke-linecap="butt"/>
<path d="M919.200 98.200H922.400M920.800 96.600V99.800M923.300 98.200H926.500M924.900 96.600V99.800" stroke="#519aba" stroke-width="1" stroke-linecap="butt"/>
<!-- breadcrumb cube icon -->
<path d="M1185 89.800 1191.800 93.200V100.600L1185 104.200 1178.200 100.600V93.200zM1178.200 93.200 1185 96.800 1191.800 93.200M1185 96.800V104.200" stroke="#b180d7" stroke-width="1.300"/>
<!-- editor actions -->
<g stroke="#c5c5c5" stroke-width="1.300">
<path d="M1403.700 63V54.200L1416.400 62.200 1408.500 67.200"/>
<path d="M1399.200 67.300a3 3 0 0 1 6 0V69.800a3 3.200 0 0 1-6 0zM1397.100 68.700H1399.200M1405.200 68.700H1407.400M1397.600 64.700 1399.600 66.300M1406.800 64.700 1404.800 66.300M1397.600 72.700 1399.700 71.100M1406.800 72.700 1404.700 71.100M1399.200 68.700H1405.200" stroke-width="1.150"/>
<path d="M1422.100 61.800 1426.600 66.300 1431.100 61.800"/>
<rect x="1478.600" y="55.400" width="15.200" height="15.200" rx="1.500"/><path d="M1486.200 55.400V70.600"/>
</g>
<path d="M1452.96 57.43 L1453.25 55.36 L1455.15 55.36 L1455.44 57.43 L1457.55 58.30 L1459.21 57.04 L1460.56 58.39 L1459.30 60.05 L1460.17 62.16 L1462.24 62.45 L1462.24 64.35 L1460.17 64.64 L1459.30 66.75 L1460.56 68.41 L1459.21 69.76 L1457.55 68.50 L1455.44 69.37 L1455.15 71.44 L1453.25 71.44 L1452.96 69.37 L1450.85 68.50 L1449.19 69.76 L1447.84 68.41 L1449.10 66.75 L1448.23 64.64 L1446.16 64.35 L1446.16 62.45 L1448.23 62.16 L1449.10 60.05 L1447.84 58.39 L1449.19 57.04 L1450.85 58.30z" stroke="#c5c5c5" stroke-width="1.3" stroke-linejoin="round"/><circle cx="1454.2" cy="63.4" r="2.1" stroke="#c5c5c5" stroke-width="1.3"/>
<g fill="#c5c5c5"><circle cx="1510.900" cy="63.500" r="1.400"/><circle cx="1517.100" cy="63.500" r="1.400"/><circle cx="1523.300" cy="63.500" r="1.400"/></g>
<!-- debug toolbar icons -->
<g fill="#8a8a8a"><rect x="816.600" y="56.600" width="2.500" height="2.500"/><rect x="821.600" y="56.600" width="2.500" height="2.500"/><rect x="816.600" y="61.600" width="2.500" height="2.500"/><rect x="821.600" y="61.600" width="2.500" height="2.500"/><rect x="816.600" y="66.600" width="2.500" height="2.500"/><rect x="821.600" y="66.600" width="2.500" height="2.500"/></g>
<g stroke="#75beff" stroke-width="2.100">
<path d="M837.300 56.200V69.600" stroke-width="2.400" stroke-linecap="butt"/>
<path d="M842.200 57.300V68.500L850.500 62.900z"/>
<path d="M867.700 62.500A7 7 0 0 1 881 60.500M881.600 55.700V61H876.300"/>
<path d="M906.100 54.800V63.400M901.500 59.500 906.100 64 910.700 59.500"/>
<path d="M937.100 64V55.200M932.500 59.500 937.100 55 941.700 59.500"/>
</g>
<g fill="#75beff"><circle cx="874.500" cy="67.700" r="2.500"/><circle cx="906.100" cy="69.100" r="2.600"/><circle cx="937.100" cy="69.100" r="2.600"/></g>
<path d="M964.200 58.700A6.400 6.400 0 1 1 963.100 63.600M962 55.800V60.900H967.200" stroke="#89d185" stroke-width="2"/>
<g stroke="#f48771" stroke-width="1.500" transform="translate(999.800 62.200) rotate(-45)">
<path d="M-1.900 -4.100V4.100H-2.600A4.100 4.100 0 0 1 -2.600 -4.100zM-6.700 0H-11.300M2.300 -4.100V4.100H3A4.100 4.100 0 0 0 3 -4.100zM7.100 0H11.300M-1.900 -1.900H.800M-1.900 1.900H.800"/>
</g>
<!-- breakpoint + current frame glyph -->
<path d="M453.900 338.400H460.300L465.800 344.900 460.300 351.400H453.900A1.200 1.200 0 0 1 452.700 350.200V339.600A1.200 1.200 0 0 1 453.900 338.400z" stroke="#ffcc00" stroke-width="1.500"/>
<circle cx="458.400" cy="344.900" r="2.900" fill="#f00f0f"/>
<!-- badge numerals + json icon -->
<g font-family="'Liberation Sans',sans-serif" font-weight="bold" font-size="10.800" fill="#ffffff" stroke="none" text-anchor="middle">
<text x="38.600" y="201.500">5</text>
<text x="38.500" y="317.300">1</text>
</g>
<text x="765.100" y="67" font-family="'Liberation Sans',sans-serif" font-weight="bold" font-size="13.500" fill="#cbcb41" stroke="none" text-anchor="middle" textLength="13.800" lengthAdjust="spacing">{}</text>
</svg>
</body>
</html>
